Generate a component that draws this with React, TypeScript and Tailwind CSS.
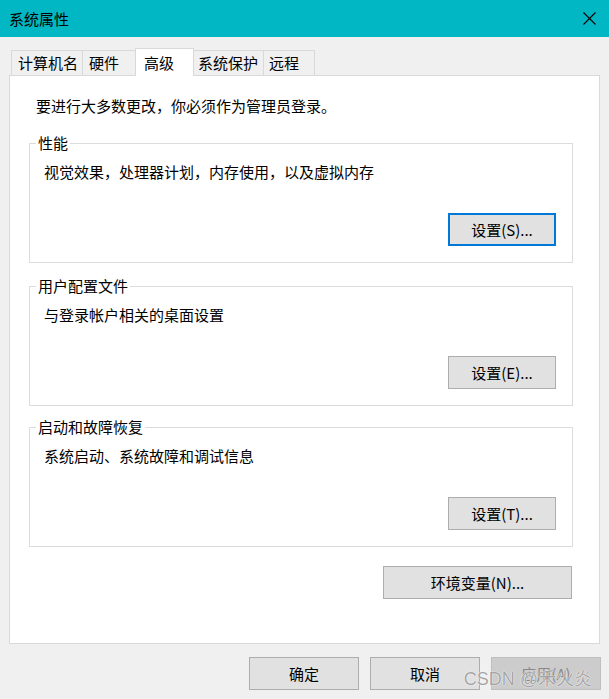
import React from 'react';

const tabs = [
  { label: '计算机名', w: 'w-[72px] pl-[6px]' },
  { label: '硬件', w: 'w-[54px] pl-[6px]' },
  { label: '高级', w: 'w-[59px] pl-[8px]', active: true },
  { label: '系统保护', w: 'w-[71px] pl-[4px]' },
  { label: '远程', w: 'w-[52px] pl-[5px]' },
];

const groups = [
  { title: '性能', desc: '视觉效果，处理器计划，内存使用，以及虚拟内存', btn: '设置(S)...', focused: true, mt: 'mt-[17px]' },
  { title: '用户配置文件', desc: '与登录帐户相关的桌面设置', btn: '设置(E)...', mt: 'mt-[13px]' },
  { title: '启动和故障恢复', desc: '系统启动、系统故障和调试信息', btn: '设置(T)...', mt: 'mt-[11px]' },
];

const Btn = ({ children, className = '', focused = false, disabled = false }: { children: React.ReactNode; className?: string; focused?: boolean; disabled?: boolean }) => (
  <button
    className={`h-[33px] flex items-center justify-center leading-[20px] ${
      disabled
        ? 'bg-[#cccccc] border border-[#bfbfbf] text-[#8a8a8a]'
        : focused
        ? 'bg-[#e1e1e1] border-2 border-[#0078d7]'
        : 'bg-[#e1e1e1] border border-[#adadad]'
    } ${className}`}
  >
    {children}
  </button>
);

export default function App() {
  return (
    <div className="relative w-[609px] h-[699px] bg-[#f0f0f0] flex flex-col text-[15px] text-black font-['Microsoft_YaHei_UI','Noto_Sans_CJK_SC',sans-serif] overflow-hidden">
      {/* title bar */}
      <div className="h-[37px] bg-[#00b7c3] flex items-center justify-between pl-[9px] pr-[13px] shrink-0">
        <span className="leading-[20px]">系统属性</span>
        <svg width="13" height="13" viewBox="0 0 13 13" className="block">
          <path d="M0.5 0.5 L12.5 12.5 M12.5 0.5 L0.5 12.5" stroke="#000" strokeWidth="1.1" fill="none" />
        </svg>
      </div>

      <div className="px-[9px] pt-[11px]">
        {/* tabs */}
        <div className="flex items-end h-[27px] pl-[2px]">
          {tabs.map((t, i) =>
            t.active ? (
              <div
                key={t.label}
                className={`${t.w} h-[28px] -mb-px relative z-10 bg-white border border-b-0 border-[#d9d9d9] flex items-center leading-[20px] -ml-px`}
              >
                {t.label}
              </div>
            ) : (
              <div
                key={t.label}
                className={`${t.w} h-[25px] bg-[#f0f0f0] border border-b-0 border-[#d9d9d9] flex items-center leading-[20px] ${i > 0 ? '-ml-px' : ''}`}
              >
                {t.label}
              </div>
            )
          )}
        </div>

        {/* panel */}
        <div className="h-[569px] bg-white border border-[#d9d9d9] pt-[20px] pl-[19px] pr-[26px] flex flex-col">
          <p className="pl-[7px] leading-[20px]">要进行大多数更改，你必须作为管理员登录。</p>

          {groups.map((g) => (
            <fieldset key={g.title} className={`${g.mt} border border-[#dcdcdc] flex flex-col`}>
              <legend className="ml-[6px] px-[2px] leading-[20px]">{g.title}</legend>
              <p className="pl-[14px] mt-[9px] leading-[20px]">{g.desc}</p>
              <div className="flex justify-end pr-[16px] mt-[31px] pb-[16px]">
                <Btn className="w-[108px]" focused={g.focused}>
                  {g.btn}
                </Btn>
              </div>
            </fieldset>
          ))}

          <div className="flex justify-end mt-[19px] pr-[1px]">
            <Btn className="w-[189px]">环境变量(N)...</Btn>
          </div>
        </div>
      </div>

      {/* footer buttons */}
      <div className="flex justify-end gap-[11px] pr-[8px] mt-[13px]">
        <Btn className="w-[110px]">确定</Btn>
        <Btn className="w-[110px]">取消</Btn>
        <Btn className="w-[110px]" disabled>
          应用(A)
        </Btn>
      </div>

      {/* watermark */}
      <div className="absolute right-[17px] bottom-[10px] text-[18px] leading-[20px] text-[#7d7d7d]/70 [text-shadow:0_0_1px_#fff,0_0_1px_#fff] font-['Liberation_Sans','Noto_Sans_CJK_SC',sans-serif] pointer-events-none">
        CSDN @禾火炎
      </div>
    </div>
  );
}
